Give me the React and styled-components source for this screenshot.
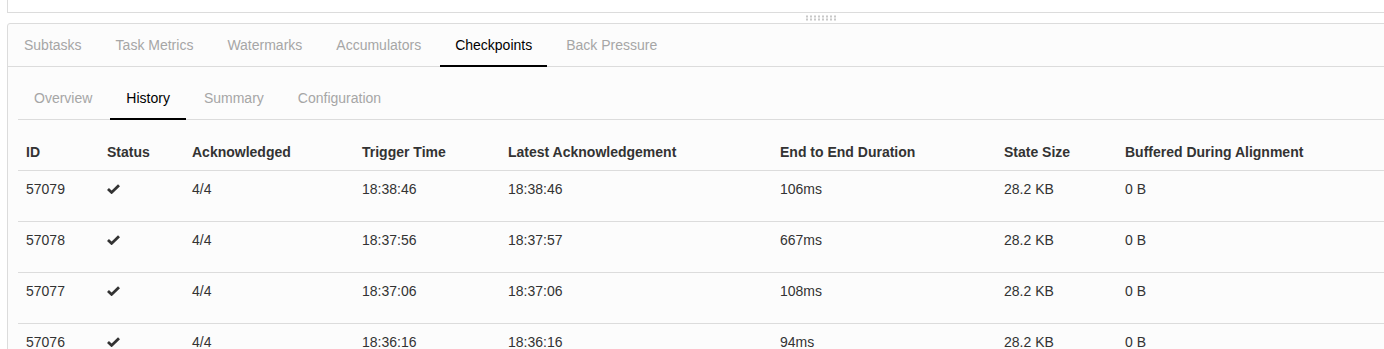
import React from "react";
import styled, { createGlobalStyle } from "styled-components";

const Global = createGlobalStyle`
  html, body { margin: 0; padding: 0; background: #fff; overflow: hidden; }
  body { font-family: "Liberation Sans", Arial, sans-serif; font-size: 14px; color: #333; }
`;

const Page = styled.div`
  padding-left: 7px;
  width: 1400px;
  height: 349px;
  overflow: hidden;
`;

const TopBox = styled.div`
  height: 12px;
  border: 1px solid #dcdcdc;
  border-top: none;
  background: #fff;
`;

const Handle = styled.div`
  height: 10px;
  display: flex;
  align-items: center;
  justify-content: center;
  padding-left: 230px;
`;

const Card = styled.div`
  border: 1px solid #dcdcdc;
  border-radius: 3px 0 0 0;
  background: #fcfcfc;
  height: 400px;
`;

const TabBar = styled.div`
  display: flex;
  gap: 4px;
  height: 43px;
  box-sizing: border-box;
  border-bottom: 1px solid #dcdcdc;
  padding-left: 1px;
`;

const Tab = styled.div`
  display: flex;
  align-items: center;
  padding: 0 15px;
  height: 43px;
  box-sizing: border-box;
  margin-bottom: -1px;
  padding-top: 1px;
  border-bottom: 2px solid ${(p) => (p.$active ? "#000" : "transparent")};
  color: ${(p) => (p.$active ? "#000" : "#a6a6a6")};
  white-space: nowrap;
`;

const Body = styled.div`
  padding: 10px 0 0 10px;
`;

const SubTabBar = styled(TabBar)`
  gap: 2px;
  padding-left: 0;
`;

const SubTab = styled(Tab)`
  padding: 1px 16px 0;
`;

const Table = styled.div`
  margin-top: 14px;
  display: grid;
  grid-template-columns: 81px 85px 170px 146px 272px 224px 121px 1fr;
`;

const HeadCell = styled.div`
  padding: 8px 8px;
  line-height: 20px;
  font-weight: bold;
  color: #333;
  border-bottom: 1px solid #dcdcdc;
  white-space: nowrap;
`;

const Cell = styled.div`
  padding: 8px 8px 22px;
  line-height: 20px;
  height: 20px;
  color: #333;
  border-bottom: 1px solid #dcdcdc;
  white-space: nowrap;
  display: flex;
  align-items: center;
`;

const Dots = () => (
  <svg width="32" height="6" viewBox="0 0 32 6">
    {Array.from({ length: 8 }).map((_, i) =>
      [0, 3].map((y) => (
        <rect key={`${i}-${y}`} x={i * 4} y={y + 0.5} width="2" height="2" fill="#c8c8c8" />
      ))
    )}
  </svg>
);

const Check = () => (
  <svg width="13" height="10" viewBox="0 0 13 10">
    <path d="M1 5 L4.6 8.4 L12 1.2" fill="none" stroke="#333" strokeWidth="2.8" />
  </svg>
);

const tabs = ["Subtasks", "Task Metrics", "Watermarks", "Accumulators", "Checkpoints", "Back Pressure"];
const subTabs = ["Overview", "History", "Summary", "Configuration"];
const headers = ["ID", "Status", "Acknowledged", "Trigger Time", "Latest Acknowledgement", "End to End Duration", "State Size", "Buffered During Alignment"];
const rows = [
  ["57079", "4/4", "18:38:46", "18:38:46", "106ms"],
  ["57078", "4/4", "18:37:56", "18:37:57", "667ms"],
  ["57077", "4/4", "18:37:06", "18:37:06", "108ms"],
  ["57076", "4/4", "18:36:16", "18:36:16", "94ms"],
];

export default function App() {
  return (
    <>
      <Global />
      <Page>
        <TopBox />
        <Handle>
          <Dots />
        </Handle>
        <Card>
          <TabBar>
            {tabs.map((t) => (
              <Tab key={t} $active={t === "Checkpoints"}>{t}</Tab>
            ))}
          </TabBar>
          <Body>
            <SubTabBar>
              {subTabs.map((t) => (
                <SubTab key={t} $active={t === "History"}>{t}</SubTab>
              ))}
            </SubTabBar>
            <Table>
              {headers.map((h) => (
                <HeadCell key={h}>{h}</HeadCell>
              ))}
              {rows.map((r) => (
                <React.Fragment key={r[0]}>
                  <Cell>{r[0]}</Cell>
                  <Cell><Check /></Cell>
                  <Cell>{r[1]}</Cell>
                  <Cell>{r[2]}</Cell>
                  <Cell>{r[3]}</Cell>
                  <Cell>{r[4]}</Cell>
                  <Cell>28.2 KB</Cell>
                  <Cell>0 B</Cell>
                </React.Fragment>
              ))}
            </Table>
          </Body>
        </Card>
      </Page>
    </>
  );
}
